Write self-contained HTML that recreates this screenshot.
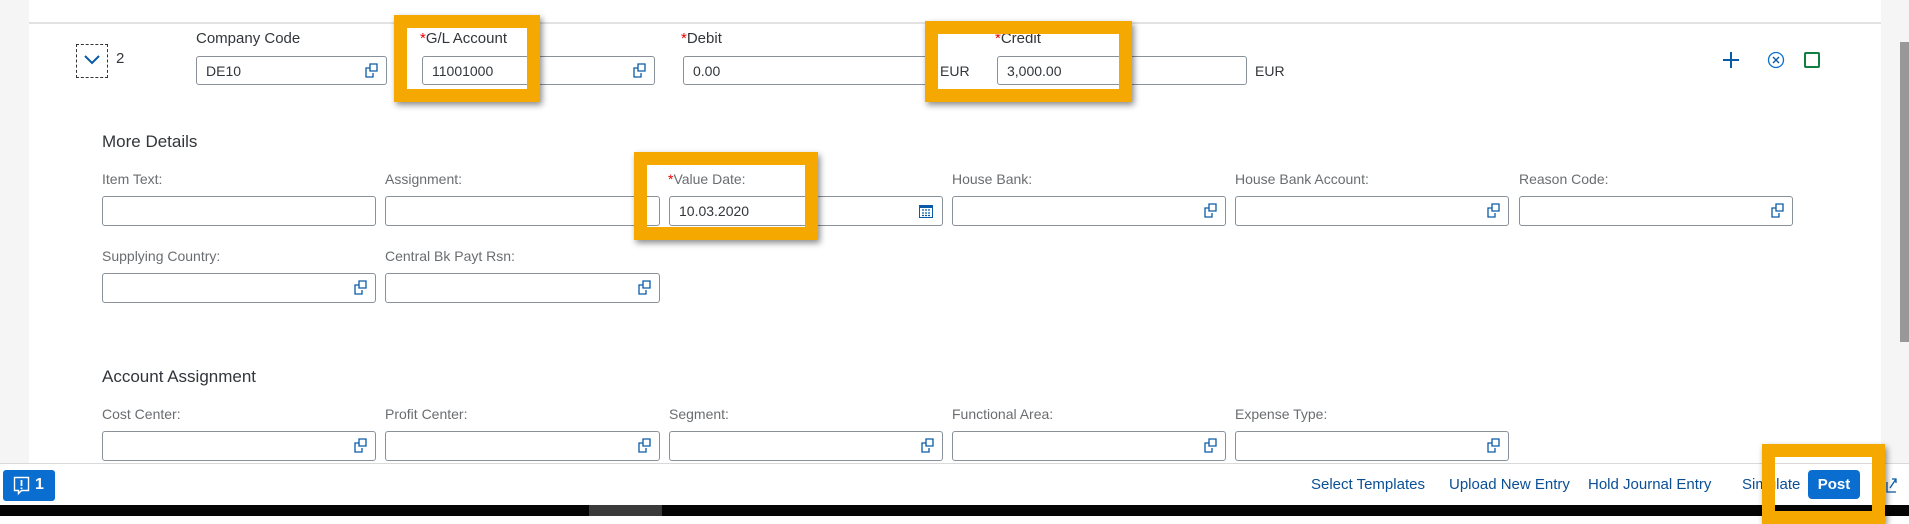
<!DOCTYPE html>
<html><head><meta charset="utf-8"><style>
*{box-sizing:border-box;margin:0;padding:0}
body{width:1909px;height:516px;position:relative;overflow:hidden;background:#fff;font-family:"Liberation Sans",Arial,sans-serif;color:#32363a;font-size:14px}
.a{position:absolute}
.lbl{position:absolute;font-size:14px;color:#6a6d70;white-space:nowrap}
.lbl.d{color:#32363a}
.req{color:#e00}
.inp{position:absolute;height:29px;border:1px solid #89919a;border-radius:3px;background:#fff;font-size:14px;color:#32363a;padding:6px 9px;white-space:nowrap}
.vh{position:absolute;right:8px;top:6px;width:14px;height:15px}
.ob{position:absolute;border:13px solid #f5a800;box-shadow:2px 3px 6px rgba(0,0,0,.45)}
.lnk{position:absolute;top:476px;font-size:15px;color:#0a4f96;white-space:nowrap}
</style></head><body>
<div class="a" style="left:0;top:0;width:29px;height:463px;background:#f5f5f5"></div>
<div class="a" style="left:1881px;top:0;width:19px;height:463px;background:#f5f5f5"></div>
<div class="a" style="left:1900px;top:0;width:9px;height:463px;background:#f5f5f5"></div>
<div class="a" style="left:1900px;top:42px;width:9px;height:300px;background:#989898"></div>
<div class="a" style="left:29px;top:22px;width:1852px;height:2px;background:#e2e2e2"></div>

<div class="a" style="left:76px;top:44px;width:32px;height:34px;border:1px dashed #333"></div>
<svg class="a" style="left:83px;top:53px" width="18" height="14"><path d="M2 3 L9 10 L16 3" stroke="#0a5aa8" stroke-width="2" fill="none"/></svg>
<div class="a" style="left:116px;top:50px;font-size:15px">2</div>

<div class="lbl d" style="left:196px;top:30px;font-size:15px">Company Code</div>
<div class="inp" style="left:196px;top:56px;width:191px">DE10<svg class="vh" viewBox="0 0 14 15"><path d="M6 1h7v7h-7z M6 5H2v9h7v-4" stroke="#0a5aa8" stroke-width="1.3" fill="none"/></svg></div>
<div class="lbl d" style="left:420px;top:30px;font-size:15px"><span class="req">*</span>G/L Account</div>
<div class="inp" style="left:422px;top:56px;width:233px">11001000<svg class="vh" viewBox="0 0 14 15"><path d="M6 1h7v7h-7z M6 5H2v9h7v-4" stroke="#0a5aa8" stroke-width="1.3" fill="none"/></svg></div>
<div class="lbl d" style="left:681px;top:30px;font-size:15px"><span class="req">*</span>Debit</div>
<div class="inp" style="left:683px;top:56px;width:245px">0.00</div>
<div class="a" style="left:940px;top:63px">EUR</div>
<div class="lbl d" style="left:995px;top:30px;font-size:15px"><span class="req">*</span>Credit</div>
<div class="inp" style="left:997px;top:56px;width:250px">3,000.00</div>
<div class="a" style="left:1255px;top:63px">EUR</div>

<svg class="a" style="left:1722px;top:51px" width="18" height="18"><path d="M9 1v16M1 9h16" stroke="#0a5aa8" stroke-width="2"/></svg>
<svg class="a" style="left:1767px;top:51px" width="18" height="18"><circle cx="9" cy="9" r="7.5" stroke="#0a6ed1" stroke-width="1.3" fill="none"/><path d="M6 6l6 6M12 6l-6 6" stroke="#0a5aa8" stroke-width="1.4"/></svg>
<div class="a" style="left:1804px;top:52px;width:16px;height:16px;border:2px solid #107e3e;border-radius:2px"></div>

<div class="a" style="left:102px;top:132px;font-size:17px">More Details</div>

<div class="lbl" style="left:102px;top:171px">Item Text:</div>
<div class="inp" style="left:102px;top:196px;width:274px;height:30px"></div>
<div class="lbl" style="left:385px;top:171px">Assignment:</div>
<div class="inp" style="left:385px;top:196px;width:275px;height:30px"></div>
<div class="lbl" style="left:668px;top:171px"><span class="req">*</span>Value Date:</div>
<div class="inp" style="left:669px;top:196px;width:274px;height:30px">10.03.2020<svg class="a" style="right:8px;top:6px" width="16" height="16" viewBox="0 0 16 16"><rect x="1.5" y="2.5" width="13" height="12" stroke="#0a5aa8" fill="none"/><rect x="1.5" y="2.5" width="13" height="2.5" fill="#0a5aa8"/><path d="M4 7h2M7 7h2M10 7h2M4 10h2M7 10h2M10 10h2M4 12.5h2M7 12.5h2M10 12.5h2" stroke="#0a5aa8" stroke-width="1.3"/></svg></div>
<div class="lbl" style="left:952px;top:171px">House Bank:</div>
<div class="inp" style="left:952px;top:196px;width:274px;height:30px"><svg class="vh" viewBox="0 0 14 15"><path d="M6 1h7v7h-7z M6 5H2v9h7v-4" stroke="#0a5aa8" stroke-width="1.3" fill="none"/></svg></div>
<div class="lbl" style="left:1235px;top:171px">House Bank Account:</div>
<div class="inp" style="left:1235px;top:196px;width:274px;height:30px"><svg class="vh" viewBox="0 0 14 15"><path d="M6 1h7v7h-7z M6 5H2v9h7v-4" stroke="#0a5aa8" stroke-width="1.3" fill="none"/></svg></div>
<div class="lbl" style="left:1519px;top:171px">Reason Code:</div>
<div class="inp" style="left:1519px;top:196px;width:274px;height:30px"><svg class="vh" viewBox="0 0 14 15"><path d="M6 1h7v7h-7z M6 5H2v9h7v-4" stroke="#0a5aa8" stroke-width="1.3" fill="none"/></svg></div>

<div class="lbl" style="left:102px;top:248px">Supplying Country:</div>
<div class="inp" style="left:102px;top:273px;width:274px;height:30px"><svg class="vh" viewBox="0 0 14 15"><path d="M6 1h7v7h-7z M6 5H2v9h7v-4" stroke="#0a5aa8" stroke-width="1.3" fill="none"/></svg></div>
<div class="lbl" style="left:385px;top:248px">Central Bk Payt Rsn:</div>
<div class="inp" style="left:385px;top:273px;width:275px;height:30px"><svg class="vh" viewBox="0 0 14 15"><path d="M6 1h7v7h-7z M6 5H2v9h7v-4" stroke="#0a5aa8" stroke-width="1.3" fill="none"/></svg></div>

<div class="a" style="left:102px;top:367px;font-size:17px">Account Assignment</div>
<div class="lbl" style="left:102px;top:406px">Cost Center:</div>
<div class="inp" style="left:102px;top:431px;width:274px;height:30px"><svg class="vh" viewBox="0 0 14 15"><path d="M6 1h7v7h-7z M6 5H2v9h7v-4" stroke="#0a5aa8" stroke-width="1.3" fill="none"/></svg></div>
<div class="lbl" style="left:385px;top:406px">Profit Center:</div>
<div class="inp" style="left:385px;top:431px;width:275px;height:30px"><svg class="vh" viewBox="0 0 14 15"><path d="M6 1h7v7h-7z M6 5H2v9h7v-4" stroke="#0a5aa8" stroke-width="1.3" fill="none"/></svg></div>
<div class="lbl" style="left:669px;top:406px">Segment:</div>
<div class="inp" style="left:669px;top:431px;width:274px;height:30px"><svg class="vh" viewBox="0 0 14 15"><path d="M6 1h7v7h-7z M6 5H2v9h7v-4" stroke="#0a5aa8" stroke-width="1.3" fill="none"/></svg></div>
<div class="lbl" style="left:952px;top:406px">Functional Area:</div>
<div class="inp" style="left:952px;top:431px;width:274px;height:30px"><svg class="vh" viewBox="0 0 14 15"><path d="M6 1h7v7h-7z M6 5H2v9h7v-4" stroke="#0a5aa8" stroke-width="1.3" fill="none"/></svg></div>
<div class="lbl" style="left:1235px;top:406px">Expense Type:</div>
<div class="inp" style="left:1235px;top:431px;width:274px;height:30px"><svg class="vh" viewBox="0 0 14 15"><path d="M6 1h7v7h-7z M6 5H2v9h7v-4" stroke="#0a5aa8" stroke-width="1.3" fill="none"/></svg></div>

<!-- footer -->
<div class="a" style="left:0;top:463px;width:1909px;height:1px;background:#d9d9d9"></div>
<div class="a" style="left:3px;top:470px;width:52px;height:31px;background:#0a6ed1;border-radius:3px"></div>
<svg class="a" style="left:13px;top:476px" width="18" height="20"><path d="M1.5 1.5h14v13h-7l-3 3v-3h-4z" stroke="#fff" stroke-width="1.4" fill="none"/><path d="M8.5 4v6M8.5 11.5v1.5" stroke="#fff" stroke-width="1.8"/></svg>
<div class="a" style="left:35px;top:476px;color:#fff;font-weight:bold;font-size:16px">1</div>
<div class="lnk" style="left:1311px">Select Templates</div>
<div class="lnk" style="left:1449px">Upload New Entry</div>
<div class="lnk" style="left:1588px">Hold Journal Entry</div>
<div class="lnk" style="left:1742px">Simulate</div>
<div class="a" style="left:1808px;top:470px;width:52px;height:29px;background:#0a6ed1;border-radius:4px;color:#fff;font-weight:bold;font-size:15px;text-align:center;line-height:29px">Post</div>
<svg class="a" style="left:1884px;top:476px" width="14" height="18"><path d="M3 6v10h9M6 12L12 3M8 3h4v4" stroke="#0a5aa8" stroke-width="1.3" fill="none"/></svg>
<div class="a" style="left:0;top:505px;width:1909px;height:11px;background:#050505"></div>
<div class="a" style="left:589px;top:505px;width:73px;height:11px;background:#3a3a3a"></div>

<!-- orange highlight boxes -->
<div class="ob" style="left:394px;top:15px;width:146px;height:87px"></div>
<div class="ob" style="left:925px;top:21px;width:207px;height:81px"></div>
<div class="ob" style="left:634px;top:152px;width:184px;height:88px"></div>
<div class="ob" style="left:1762px;top:444px;width:123px;height:80px"></div>
</body></html>
